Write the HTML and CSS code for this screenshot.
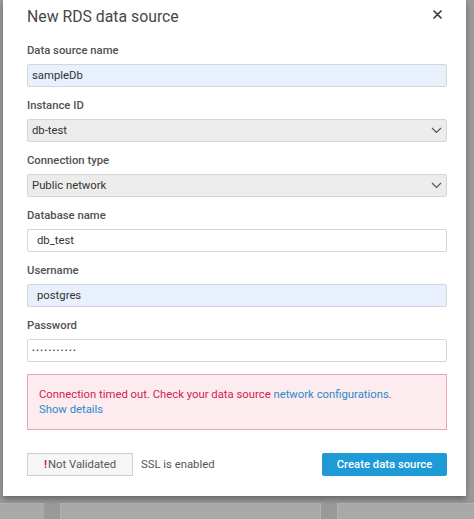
FILE: index.html
```html
<!DOCTYPE html>
<html>
<head>
<meta charset="utf-8">
<title>New RDS data source</title>
<link rel="stylesheet" href="styles.css">
</head>
<body>
<div class="page">
  <div class="modal">
    <div class="modal-header">
      <h1 class="title">New RDS data source</h1>
      <span class="close" aria-label="Close">
        <svg width="9" height="9" viewBox="0 0 9 9"><path d="M1 1L8 8M8 1L1 8" stroke="#3d3d3d" stroke-width="1.7" fill="none" stroke-linecap="round"/></svg>
      </span>
    </div>
    <div class="form">
      <div class="field">
        <div class="label">Data source name</div>
        <div class="input autofill pad-s">sampleDb</div>
      </div>
      <div class="field">
        <div class="label">Instance ID</div>
        <div class="input select"><span>db-test</span>
          <svg width="11" height="7" viewBox="0 0 11 7"><path d="M1 1L5.5 5.5L10 1" stroke="#555" stroke-width="1.2" fill="none"/></svg>
        </div>
      </div>
      <div class="field">
        <div class="label">Connection type</div>
        <div class="input select"><span>Public network</span>
          <svg width="11" height="7" viewBox="0 0 11 7"><path d="M1 1L5.5 5.5L10 1" stroke="#555" stroke-width="1.2" fill="none"/></svg>
        </div>
      </div>
      <div class="field">
        <div class="label">Database name</div>
        <div class="input pad-l">db_test</div>
      </div>
      <div class="field">
        <div class="label">Username</div>
        <div class="input autofill pad-l">postgres</div>
      </div>
      <div class="field">
        <div class="label">Password</div>
        <div class="input pad-s password">•••••••••••</div>
      </div>
    </div>
    <div class="alert">
      <div>Connection timed out. Check your data source <span class="link">network configurations</span>.</div>
      <div class="link">Show details</div>
    </div>
    <div class="footer">
      <div class="status-btn"><span class="bang">!</span>Not Validated</div>
      <span class="ssl">SSL is enabled</span>
      <div class="primary-btn">Create data source</div>
    </div>
  </div>
  <div class="backdrop-row">
    <div class="panel p1"></div>
    <div class="panel p2"></div>
    <div class="panel p3"></div>
  </div>
</div>
</body>
</html>
```

FILE: styles.css
```css
html, body {
  margin: 0;
  padding: 0;
}
body {
  background: #9c9c9c;
  font-family: Roboto, "Liberation Sans", sans-serif;
  width: 474px;
  height: 519px;
  overflow: hidden;
}
.page {
  display: flex;
  flex-direction: column;
  height: 519px;
}
.modal {
  margin-left: 3px;
  width: 463px;
  height: 496px;
  box-sizing: border-box;
  background: #fff;
  padding: 5px 19px 0 24px;
  box-shadow: 0 3px 6px rgba(0, 0, 0, 0.35);
  position: relative;
  z-index: 1;
  display: flex;
  flex-direction: column;
}
.modal-header {
  display: flex;
  justify-content: space-between;
  align-items: center;
  height: 24px;
}
.title {
  margin: 0;
  font-size: 15.8px;
  font-weight: 400;
  line-height: 24px;
  color: #474747;
}
.close {
  display: flex;
  margin-right: 5px;
  margin-top: -6px;
}
.form {
  margin-top: 14px;
  display: flex;
  flex-direction: column;
  gap: 11px;
}
.label {
  font-size: 11.3px;
  font-weight: 500;
  line-height: 16px;
  color: #515151;
  margin-bottom: 5px;
}
.input {
  height: 23px;
  box-sizing: border-box;
  border: 1px solid #d6d6d6;
  border-radius: 2px;
  padding: 0 4px;
  font-size: 11.3px;
  line-height: 21px;
  color: #333;
  background: #fff;
}
.pad-s { padding-left: 4px; }
.pad-l { padding-left: 9px; }
.autofill {
  background: #e8f0fe;
}
.password {
  font-size: 8px;
  letter-spacing: 1.4px;
  color: #333;
}
.select {
  background: #ececec;
  display: flex;
  justify-content: space-between;
  align-items: center;
  padding-right: 4px;
}
.alert {
  margin-top: 12px;
  height: 56px;
  box-sizing: border-box;
  border: 1px solid #eba4b6;
  background: #fcebef;
  padding: 12px 11px;
  font-size: 11.3px;
  line-height: 15px;
  color: #d1214d;
}
.link {
  color: #2b8acb;
}
.footer {
  margin-top: 23px;
  display: flex;
  align-items: center;
}
.status-btn {
  width: 106px;
  height: 23px;
  box-sizing: border-box;
  border: 1px solid #cfcfcf;
  background: #f6f6f6;
  display: flex;
  align-items: center;
  justify-content: center;
  font-size: 11.3px;
  color: #555;
}
.bang {
  color: #d1214d;
  font-weight: 700;
  margin-right: 1px;
}
.ssl {
  margin-left: 8px;
  font-size: 11.3px;
  color: #555;
}
.primary-btn {
  margin-left: auto;
  width: 125px;
  height: 23px;
  box-sizing: border-box;
  background: #1e9ad6;
  border-radius: 2px;
  color: #fff;
  font-size: 11.3px;
  font-weight: 500;
  display: flex;
  align-items: center;
  justify-content: center;
}
.backdrop-row {
  flex: 1;
  display: flex;
  gap: 16px;
  padding-top: 7px;
  background: #999;
}
.panel {
  background: #a9a9a9;
  border-top: 1px solid #b3b3b3;
}
.p1 { width: 44px; }
.p2 { width: 259px; border-left: 1px solid #b3b3b3; border-right: 1px solid #b3b3b3; }
.p3 { flex: 1; border-left: 1px solid #b3b3b3; }
```
